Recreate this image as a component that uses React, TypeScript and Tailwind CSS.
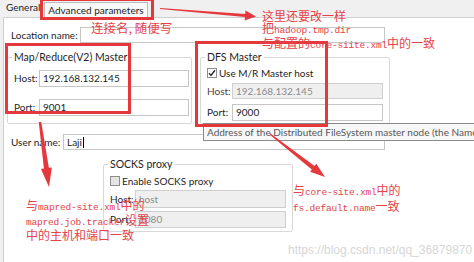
import React from 'react';

type Pt = [number, number];

// tapered arrow as one polygon: shaft from a to the head base, then the head
function arrowPoints(a: Pt, tip: Pt, w0: number, w1: number, headLen: number, headW: number) {
  const dx = tip[0] - a[0];
  const dy = tip[1] - a[1];
  const len = Math.hypot(dx, dy);
  const ux = dx / len, uy = dy / len;
  const px = -uy, py = ux;
  const bx = tip[0] - ux * headLen, by = tip[1] - uy * headLen;
  const pts: Pt[] = [
    [a[0] + px * w0 / 2, a[1] + py * w0 / 2],
    [bx + px * w1 / 2, by + py * w1 / 2],
    [bx + px * headW / 2, by + py * headW / 2],
    tip,
    [bx - px * headW / 2, by - py * headW / 2],
    [bx - px * w1 / 2, by - py * w1 / 2],
    [a[0] - px * w0 / 2, a[1] - py * w0 / 2],
  ];
  return pts.map((p) => p.join(',')).join(' ');
}

function Input({ w, h, value, disabled, children }: { w: number; h: number; value?: string; disabled?: boolean; children?: React.ReactNode }) {
  return (
    <div
      className={`flex shrink-0 items-center border px-[3px] whitespace-nowrap overflow-hidden ${disabled ? 'border-[#cfcfcf] bg-[#efefef] text-[#8c8c8c]' : 'border-[#c6c6c6] bg-white text-[#1e1e1e]'}`}
      style={{ width: w, height: h }}
    >
      {value}
      {children}
    </div>
  );
}

function Check({ checked }: { checked?: boolean }) {
  return (
    <span className={`flex h-[10px] w-[10px] items-center justify-center border border-[#8e8e8e] ${checked ? 'bg-white' : 'bg-[#e4e4e4]'}`}>
      {checked && (
        <svg width="8" height="8" viewBox="0 0 8 8">
          <path d="M1 4.2 L3 6.4 L7 1.2" fill="none" stroke="#2b2b2b" strokeWidth="1.4" />
        </svg>
      )}
    </span>
  );
}

function Mono({ children }: { children: React.ReactNode }) {
  return <span className="font-['Liberation_Mono',monospace] text-[9.5px] tracking-[-0.2px]">{children}</span>;
}

export default function App() {
  return (
    <div className="relative h-[262px] w-[474px] overflow-hidden bg-[#f0f0f0] font-['Lato','Liberation_Sans',sans-serif] text-[10px] leading-[13px] text-[#1e1e1e]">
      {/* tabs */}
      <div className="flex h-[17px] items-end">
        <span className="mb-[3px] ml-[6px]">General</span>
        <span className="ml-[4px] flex h-[15px] items-center border border-b-0 border-[#bdbdbd] bg-[#f8f8f8] px-[3px]">Advanced parameters</span>
      </div>

      {/* panel */}
      <div className="ml-[3px] h-[245px] border-l border-t border-[#cfcfcf] bg-white">
        <div className="mt-[9px] flex items-center">
          <span className="w-[76px] pl-[7px]">Location name:</span>
          <Input w={305} h={16} />
        </div>

        <div className="mt-[8px] flex items-start">
          <fieldset className="ml-[3px] h-[73px] w-[185px] min-w-0 rounded-[2px] border border-[#d8d8d8] pl-[6px] pr-[1px]">
            <legend className="-ml-[2px] px-[2px] text-[10.5px] leading-[13px]">Map/Reduce(V2) Master</legend>
            <div className="mt-[6px] flex items-center">
              <span className="w-[25px]">Host:</span>
              <Input w={150} h={17} value="192.168.132.145" />
            </div>
            <div className="mt-[12px] flex items-center">
              <span className="w-[25px]">Port:</span>
              <Input w={150} h={17} value="9001" />
            </div>
          </fieldset>

          <fieldset className="ml-[8px] h-[73px] w-[190px] min-w-0 rounded-[2px] border border-[#d8d8d8] pl-[6px] pr-[5px]">
            <legend className="-ml-[2px] px-[2px] text-[10.5px] leading-[13px]">DFS Master</legend>
            <div className="mt-[2px] flex h-[14px] items-center gap-[2px]">
              <Check checked />
              <span>Use M/R Master host</span>
            </div>
            <div className="mt-[3px] flex items-center">
              <span className="w-[25px] text-[#444]">Host:</span>
              <Input w={151} h={16} value="192.168.132.145" disabled />
            </div>
            <div className="mt-[5px] flex items-center">
              <span className="w-[25px]">Port:</span>
              <Input w={151} h={17} value="9000" />
            </div>
          </fieldset>
        </div>

        <div className="mt-[10px] flex items-center">
          <span className="w-[59px] pl-[7px]">User name:</span>
          <Input w={322} h={16}>
            Laji<span className="ml-[1px] inline-block h-[11px] w-px bg-black" />
          </Input>
        </div>

        <fieldset className="ml-[99px] mt-[8px] h-[74px] w-[190px] min-w-0 rounded-[2px] border border-[#d8d8d8] pl-[6px] pr-[5px]">
          <legend className="-ml-[2px] px-[2px] text-[10.5px] leading-[13px]">SOCKS proxy</legend>
          <div className="mt-[3px] flex h-[14px] items-center gap-[2px]">
            <Check />
            <span>Enable SOCKS proxy</span>
          </div>
          <div className="mt-[2px] flex items-center">
            <span className="w-[25px]">Host:</span>
            <Input w={151} h={18} value="host" disabled />
          </div>
          <div className="mt-[3px] flex items-center">
            <span className="w-[25px]">Port:</span>
            <Input w={151} h={17} value="1080" disabled />
          </div>
        </fieldset>
      </div>

      {/* tooltip */}
      <div className="absolute left-[203px] top-[123px] flex h-[18px] items-center whitespace-nowrap border border-[#8a8a8a] bg-[#f7f7f7] px-[3px] text-[#575757]">
        Address of the Distributed FileSystem master node (the NameNode)
      </div>

      {/* annotation boxes */}
      <div className="absolute left-[40px] top-[-2px] h-[22px] w-[114px] border-[3px] border-[#e5383d]" />
      <div className="absolute left-[5px] top-[43px] h-[71px] w-[126px] border-[3px] border-[#e5383d]" />
      <div className="absolute left-[195px] top-[41px] h-[86px] w-[133px] border-[3px] border-[#e5383d]" />

      {/* arrows */}
      <svg className="pointer-events-none absolute inset-0" width="474" height="262">
        <polygon points={arrowPoints([160, 8.5], [256, 16.5], 1.2, 3, 11, 10)} fill="#e5383d" />
        <polygon points={arrowPoints([40, 122], [49, 187], 2.5, 5, 19, 11)} fill="#e5383d" />
        <polygon points={arrowPoints([270, 134], [325, 177], 1.5, 4.5, 15, 10)} fill="#e5383d" />
      </svg>

      {/* annotation texts */}
      <div className="absolute left-[91px] top-[21px] font-['Noto_Sans_CJK_SC',sans-serif] text-[12.5px] leading-[14px] text-[#e4434a]">
        连接名, 随便写
      </div>
      <div className="absolute left-[262px] top-[10px] font-['Noto_Sans_CJK_SC',sans-serif] text-[12px] leading-[12px] text-[#e4434a]">
        <div>这里还要改一样</div>
        <div>把<Mono>hadoop.tmp.dir</Mono></div>
        <div>与配置的<Mono>core-siite.xml</Mono>中的一致</div>
      </div>
      <div className="absolute left-[293px] top-[183px] font-['Noto_Sans_CJK_SC',sans-serif] text-[12px] leading-[13px] text-[#e4434a]">
        <div>与<Mono>core-site.xml</Mono>中的</div>
        <div><Mono>fs.default.name</Mono>一致</div>
      </div>
      <div className="absolute left-[26px] top-[199px] font-['Noto_Sans_CJK_SC',sans-serif] text-[12px] leading-[12px] text-[#e4434a]">
        <div>与<Mono>mapred-site.xml</Mono>中的</div>
        <div><Mono>mapred.job.tracker</Mono>设置</div>
        <div>中的主机和端口一致</div>
      </div>

      {/* watermark */}
      <div className="absolute left-[288px] top-[243px] font-['Liberation_Sans',sans-serif] text-[12px] leading-[14px] text-[#d6d6d6]">
        https://blog.csdn.net/qq_36879870
      </div>
    </div>
  );
}
